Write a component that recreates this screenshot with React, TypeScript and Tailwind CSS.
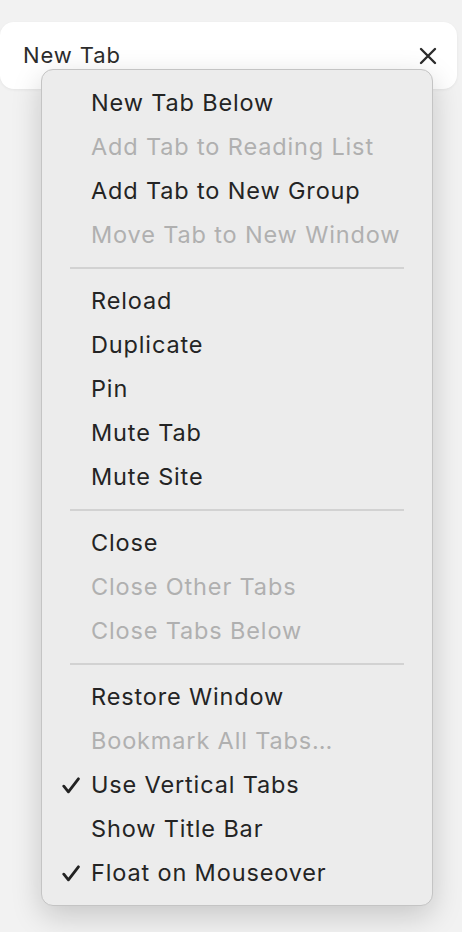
import React from "react";

type Item =
  | { kind: "item"; label: string; disabled?: boolean; checked?: boolean }
  | { kind: "sep" };

const MENU: Item[] = [
  { kind: "item", label: "New Tab Below" },
  { kind: "item", label: "Add Tab to Reading List", disabled: true },
  { kind: "item", label: "Add Tab to New Group" },
  { kind: "item", label: "Move Tab to New Window", disabled: true },
  { kind: "sep" },
  { kind: "item", label: "Reload" },
  { kind: "item", label: "Duplicate" },
  { kind: "item", label: "Pin" },
  { kind: "item", label: "Mute Tab" },
  { kind: "item", label: "Mute Site" },
  { kind: "sep" },
  { kind: "item", label: "Close" },
  { kind: "item", label: "Close Other Tabs", disabled: true },
  { kind: "item", label: "Close Tabs Below", disabled: true },
  { kind: "sep" },
  { kind: "item", label: "Restore Window" },
  { kind: "item", label: "Bookmark All Tabs…", disabled: true },
  { kind: "item", label: "Use Vertical Tabs", checked: true },
  { kind: "item", label: "Show Title Bar" },
  { kind: "item", label: "Float on Mouseover", checked: true },
];

function Check() {
  return (
    <svg width="18" height="17" viewBox="0 0 18 17" className="shrink-0">
      <path d="M1.8 9.2 L6.4 14.8 L16.4 1.8" fill="none" stroke="#222" strokeWidth="2.8" strokeLinecap="round" strokeLinejoin="round" />
    </svg>
  );
}

export default function App() {
  return (
    <div className="w-[462px] h-[932px] bg-[#f2f2f2] font-['Inter','Liberation_Sans',sans-serif] pt-[22px] overflow-hidden">
      {/* tab card */}
      <div className="relative w-[457px] h-[67px] bg-white rounded-[14px] shadow-[0_1px_3px_rgba(0,0,0,0.06)] flex items-start justify-between pl-[23px] pr-[20px] pt-[19px]">
        <span className="text-[22px] leading-[28px] tracking-[0.9px] text-[#2c2c2c]">New Tab</span>
        <svg width="18" height="18" viewBox="0 0 18 18" className="mt-[6px]">
          <path d="M2 2 L16 16 M16 2 L2 16" stroke="#2c2c2c" strokeWidth="2.4" strokeLinecap="round" />
        </svg>

        {/* context menu */}
        <div className="absolute left-[41px] top-[47px] w-[392px] bg-[#ececec] border border-[#c4c4c4] rounded-[12px] shadow-[0_10px_30px_rgba(0,0,0,0.18)] pt-[11px] pb-[10px]">
          {MENU.map((it, i) =>
            it.kind === "sep" ? (
              <div key={i} className="h-[22px] flex items-center px-[28px]">
                <div className="h-[2px] w-full bg-[#d2d2d2]" />
              </div>
            ) : (
              <div key={i} className="h-[44px] flex items-center">
                <div className="w-[49px] flex justify-end pr-[11px]">{it.checked ? <Check /> : null}</div>
                <span
                  className={`text-[23.5px] leading-[30px] tracking-[0.85px] ${it.disabled ? "text-[#b0b0b0]" : "text-[#242424]"}`}
                >
                  {it.label}
                </span>
              </div>
            )
          )}
        </div>
      </div>
    </div>
  );
}
